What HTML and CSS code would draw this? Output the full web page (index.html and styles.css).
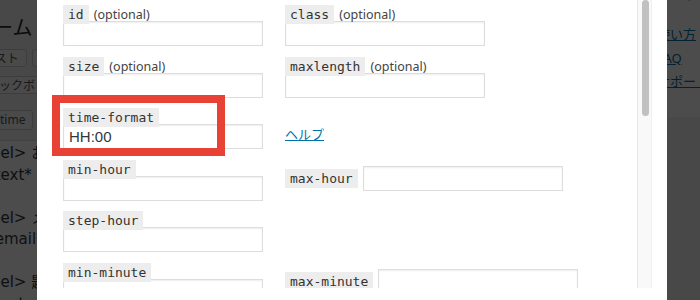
FILE: index.html
```html
<!DOCTYPE html>
<html lang="ja">
<head>
  <meta charset="UTF-8">
  <meta name="viewport" content="width=device-width, initial-scale=1.0">
  <title>フォームタグ生成: time</title>
  <link rel="stylesheet" href="styles.css">
</head>
<body>
  <!-- 背後の編集画面 -->
  <div class="page">
    <div class="page-main">
      <div class="page-head">
        <h1 class="page-title">コンタクトフォーム</h1>
        <span class="add-new">新規追加</span>
      </div>
      <div class="tag-buttons row-1">
        <span class="tag-button">テキスト</span>
        <span class="tag-button">メールアドレス</span>
      </div>
      <div class="tag-buttons row-2">
        <span class="tag-button">チェックボックス</span>
      </div>
      <div class="tag-buttons row-3">
        <span class="tag-button">time</span>
      </div>
      <div class="form-source">&lt;label&gt; お名前 (必須)
     [text* your-name] &lt;/label&gt;

&lt;label&gt; メールアドレス (必須)
     [email* your-email] &lt;/label&gt;

&lt;label&gt; 題名
     [text your-subject] &lt;/label&gt;</div>
    </div>
    <aside class="page-side">
      <div class="postbox">
        <h3 class="postbox-title">ヘルプが必要ですか？</h3>
        <ul class="help-links">
          <li><a href="#">使い方</a></li>
          <li><a href="#">FAQ</a></li>
          <li><a href="#">サポート</a></li>
        </ul>
      </div>
    </aside>
  </div>

  <div class="backdrop"></div>

  <!-- タグ生成モーダル -->
  <div class="modal">
    <div class="modal-body">
      <div class="modal-scroll">
        <div class="field-grid">
          <div class="field">
            <div class="field-label"><code class="tag-name">id</code><span class="opt">(optional)</span></div>
            <input type="text" class="text-input">
          </div>
          <div class="field">
            <div class="field-label"><code class="tag-name">class</code><span class="opt">(optional)</span></div>
            <input type="text" class="text-input">
          </div>

          <div class="field">
            <div class="field-label"><code class="tag-name">size</code><span class="opt">(optional)</span></div>
            <input type="text" class="text-input">
          </div>
          <div class="field">
            <div class="field-label"><code class="tag-name">maxlength</code><span class="opt">(optional)</span></div>
            <input type="text" class="text-input">
          </div>

          <div class="field">
            <div class="field-label"><code class="tag-name">time-format</code></div>
            <input type="text" class="text-input" value="HH:00">
            <div class="highlight"></div> <!-- 赤枠 -->
          </div>
          <div class="cell-end">
            <a href="#" class="help-link">ヘルプ</a>
          </div>

          <div class="field">
            <div class="field-label"><code class="tag-name">min-hour</code></div>
            <input type="text" class="text-input">
          </div>
          <div class="inline-field">
            <code class="tag-name">max-hour</code>
            <input type="text" class="text-input">
          </div>

          <div class="field">
            <div class="field-label"><code class="tag-name">step-hour</code></div>
            <input type="text" class="text-input">
          </div>
          <div></div>

          <div class="field">
            <div class="field-label"><code class="tag-name">min-minute</code></div>
            <input type="text" class="text-input">
          </div>
          <div class="inline-field">
            <code class="tag-name">max-minute</code>
            <input type="text" class="text-input">
          </div>
        </div>
      </div>
      <div class="scrollbar">
        <div class="scrollbar-thumb"></div>
      </div>
    </div>
  </div>
</body>
</html>
```

FILE: styles.css
```css
/* 全体 */
body {
  margin: 0;
  width: 700px;
  height: 300px;
  overflow: hidden;
  background-color: #f1f1f1;
  font-family: 'Noto Sans', 'Noto Sans CJK JP', sans-serif;
  color: #23282d;
}

/* 背後の編集画面 */
.page {
  display: flex;
}

.page-main {
  flex: none;
  width: 645px;
  overflow: hidden;
}

.page-head {
  display: flex;
  align-items: center;
  gap: 10px;
  margin: 14px 0 0 -147px;
  white-space: nowrap;
}

.page-title {
  margin: 0;
  font-family: 'Noto Sans CJK JP', sans-serif;
  font-size: 20px;
  font-weight: 400;
  line-height: 26px;
}

.add-new {
  padding: 0 8px;
  font-family: 'Noto Sans CJK JP', sans-serif;
  font-size: 13px;
  line-height: 22px;
  color: #0073aa;
  background-color: #f7f7f7;
  border: 1px solid #ccc;
  border-radius: 2px;
}

.tag-buttons {
  display: flex;
  gap: 5px;
  white-space: nowrap;
}

.row-1 { margin: 9px 0 0 -37px; }
.row-2 { margin: 9px 0 0 -33px; }
.row-3 { margin: 16px 0 0 -8px; }

.tag-button {
  padding: 0 7px;
  font-family: 'Noto Sans CJK JP', sans-serif;
  font-size: 12px;
  line-height: 16px;
  color: #555;
  background-color: #f7f7f7;
  border: 1px solid #ccc;
  border-radius: 3px;
}

.row-3 .tag-button {
  font-family: 'Noto Sans', sans-serif;
  line-height: 18px;
}

.form-source {
  margin: 10px 0 0 -36px;
  padding-top: 2px;
  font-family: 'DejaVu Sans', 'Noto Sans CJK JP', sans-serif;
  font-size: 15px;
  line-height: 21.5px;
  white-space: pre;
  color: #32373c;
  background-color: #fff;
  border: 1px solid #ddd;
  height: 300px;
}

.page-side {
  flex: 1;
}

.postbox {
  padding: 0 0 23px 12px;
  background-color: #fff;
}

.postbox-title {
  margin: -15px 0 0;
  font-size: 14px;
  line-height: 18px;
  white-space: nowrap;
}

.help-links {
  list-style: none;
  margin: 20px 0 0;
  padding: 0;
  font-family: 'Noto Sans', 'Noto Sans CJK JP', sans-serif;
  font-size: 13px;
  line-height: 23.5px;
  white-space: nowrap;
}

.help-links a {
  color: #0073aa;
}

/* 暗幕 */
.backdrop {
  position: fixed;
  inset: 0;
  background-color: rgba(0, 0, 0, 0.7);
}

/* モーダル */
.modal {
  position: fixed;
  top: 0;
  left: 37px;
  width: 630px;
  height: 300px;
  padding-right: 15px;
  box-sizing: border-box;
  background-color: #fff;
}

.modal-body {
  display: flex;
  height: 288px;
}

.modal-scroll {
  flex: 1;
  overflow: hidden;
  padding: 2px 0 0 26px;
}

.scrollbar {
  flex: none;
  width: 13px;
  background-color: #f9f9f9;
  border-left: 1px solid #e6e6e6;
  border-right: 1px solid #efefef;
}

.scrollbar-thumb {
  width: 7px;
  height: 116px;
  margin-left: 4px;
  background-color: #c1c1c1;
  border-radius: 4px;
}

.field-grid {
  display: grid;
  grid-template-columns: 200px 1fr;
  column-gap: 22px;
  row-gap: 7.5px;
  align-items: start;
}

.field {
  position: relative;
}

.field-label {
  height: 19px;
  white-space: nowrap;
}

.tag-name {
  display: inline-block;
  padding: 0 5px;
  font-family: 'DejaVu Sans Mono', monospace;
  font-size: 13px;
  line-height: 19px;
  color: #333;
  background-color: #ededed;
}

.opt {
  margin-left: 5px;
  font-size: 12.5px;
  line-height: 19px;
  color: #444;
}

.text-input {
  display: block;
  width: 200px;
  height: 25px;
  margin: 0;
  padding: 0 5px;
  box-sizing: border-box;
  border: 1px solid #ddd;
  box-shadow: inset 0 1px 2px rgba(0, 0, 0, 0.07);
  background-color: #fff;
  font-family: 'Liberation Sans', Arial, sans-serif;
  font-size: 15px;
  color: #32373c;
}

.highlight {
  position: absolute;
  top: -10px;
  left: -11px;
  width: 173px;
  height: 61px;
  box-sizing: border-box;
  border: 8px solid #e84135;
}

.cell-end {
  align-self: end;
  padding-bottom: 3px;
  line-height: 25px;
}

.help-link {
  font-family: 'Noto Sans CJK JP', sans-serif;
  font-size: 13px;
  color: #0073aa;
}

.inline-field {
  align-self: center;
  display: flex;
  align-items: center;
  gap: 5px;
}
```
